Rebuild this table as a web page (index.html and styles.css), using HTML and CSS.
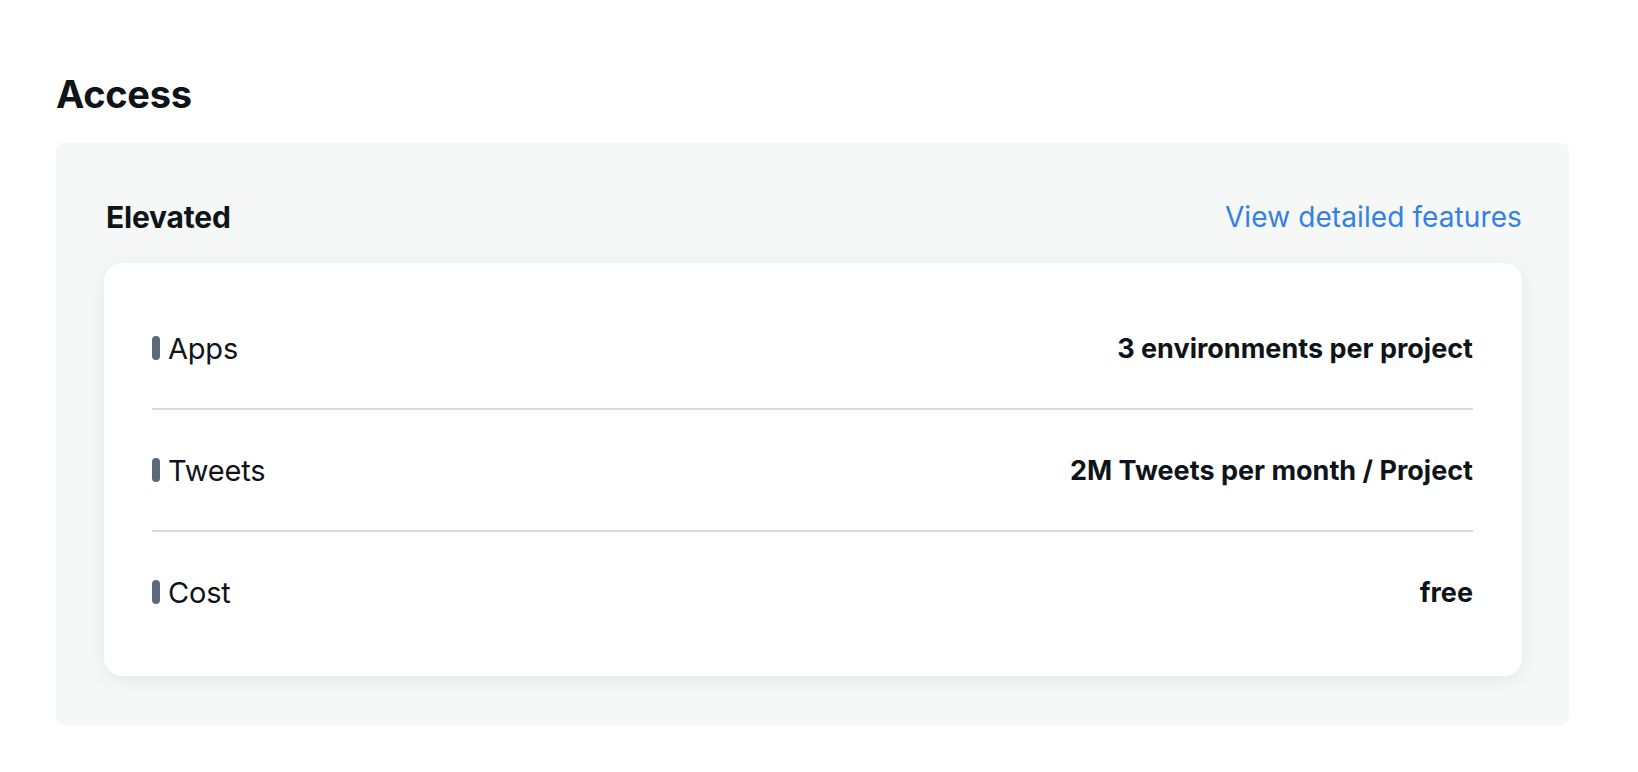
FILE: index.html
```html
<!DOCTYPE html>
<html>
<head>
<meta charset="utf-8">
<link rel="stylesheet" href="styles.css">
</head>
<body>
<main class="page">
  <h1 class="title">Access</h1>
  <section class="panel">
    <div class="panel-head">
      <h2 class="tier">Elevated</h2>
      <a class="link" href="#">View detailed features</a>
    </div>
    <div class="card">
      <div class="row">
        <span class="label"><span class="bar"></span>Apps</span>
        <span class="value">3 environments per project</span>
      </div>
      <div class="row">
        <span class="label"><span class="bar"></span>Tweets</span>
        <span class="value">2M Tweets per month / Project</span>
      </div>
      <div class="row">
        <span class="label"><span class="bar"></span>Cost</span>
        <span class="value">free</span>
      </div>
    </div>
  </section>
</main>
</body>
</html>
```

FILE: styles.css
```css
html, body {
  margin: 0;
  background: #ffffff;
}
body {
  font-family: Inter, "Noto Sans", "Liberation Sans", sans-serif;
  color: #0f1419;
}
.page {
  padding: 71px 69px 0 56px;
}
.title {
  margin: 0 0 26px;
  font-size: 38px;
  line-height: 46px;
  font-weight: 700;
  letter-spacing: -0.3px;
}
.panel {
  background: #f6f7f7;
  border-radius: 8px;
  padding: 56px 47px 49px 48px;
}
.panel-head {
  display: flex;
  justify-content: space-between;
  align-items: center;
  height: 36px;
  margin-bottom: 28px;
}
.tier {
  margin: 0 0 0 2px;
  font-size: 30px;
  line-height: 36px;
  font-weight: 700;
  letter-spacing: -0.2px;
}
.link {
  color: #3380e5;
  text-decoration: none;
  font-size: 28px;
  line-height: 36px;
  letter-spacing: 0.1px;
}
.card {
  background: #ffffff;
  border-radius: 18px;
  box-shadow: 0 4px 18px rgba(0, 0, 0, 0.07);
  padding: 25px 49px 24px 48px;
}
.row {
  display: flex;
  justify-content: space-between;
  align-items: center;
  height: 120px;
  border-bottom: 2px solid #d4dbdf;
}
.row:last-child {
  border-bottom: none;
}
.label {
  display: flex;
  align-items: center;
  gap: 8px;
  font-size: 29px;
  letter-spacing: -0.2px;
}
.bar {
  width: 8px;
  height: 24px;
  border-radius: 4px;
  background: #5b6978;
}
.value {
  font-size: 27px;
  font-weight: 700;
}
```
